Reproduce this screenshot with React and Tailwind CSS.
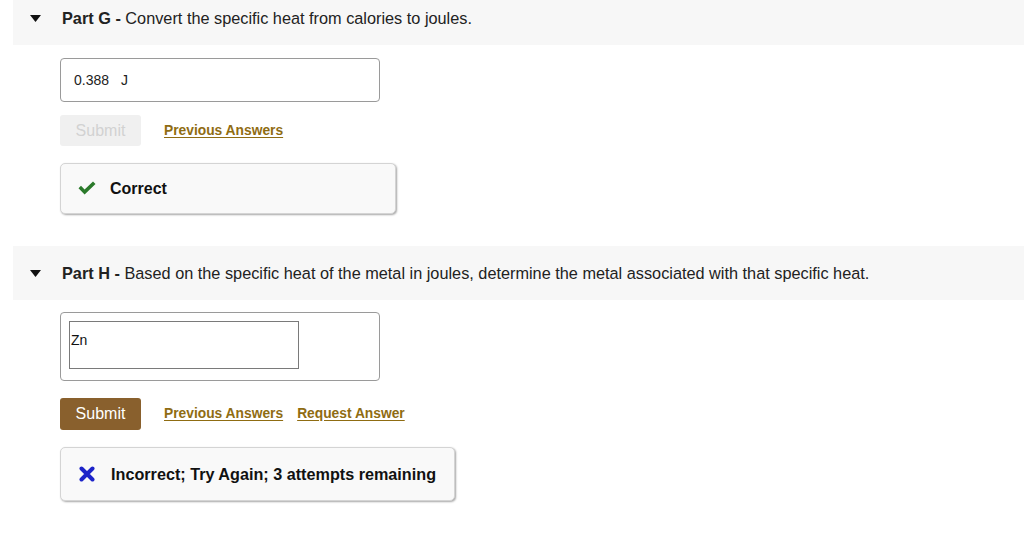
import React from 'react';

const font = { fontFamily: '"Liberation Sans", Arial, Helvetica, sans-serif' };

const Caret = () => (
    <svg width="11" height="7" viewBox="0 0 11 7" className="shrink-0">
        <path d="M0 0 L11 0 L5.5 7 Z" fill="#111" />
    </svg>
);

const Check = () => (
    <svg width="18" height="15" viewBox="0 0 18 15">
        <path d="M0.5 7.2 L3 4.8 L6.6 8.4 L15 0.5 L17.5 3 L6.6 13.6 Z" fill="#2b7a2b" />
    </svg>
);

const Cross = () => (
    <svg width="16" height="16" viewBox="0 0 16 16">
        <path d="M2.5 2.5 L13.5 13.5 M13.5 2.5 L2.5 13.5" stroke="#1d24c9" strokeWidth="4" strokeLinecap="round" />
    </svg>
);

const PartHeader = ({ label, text, className }) => (
    <div className={`ml-[13px] h-[54px] bg-[#f7f7f7] flex items-center pl-[17px] ${className}`}>
        <Caret />
        <div className="ml-[21px] text-[16.3px] text-[#222] pt-[1px]">
            <span className="font-bold">{label} -</span> {text}
        </div>
    </div>
);

const LinkText = ({ children }) => (
    <a href="#" className="text-[13.8px] font-bold text-[#8f6c12] underline underline-offset-2">{children}</a>
);

export default function App() {
    return (
        <div className="w-full h-[535px] bg-white overflow-hidden" style={font}>
            {/* Part G */}
            <PartHeader label="Part G" text="Convert the specific heat from calories to joules." className="-mt-[9px]" />
            <div className="pl-[60px]">
                <div className="mt-[13px] w-[320px] h-[44px] rounded-[4px] border border-[#9a9a9a] flex items-center pl-[13px] text-[14px] text-[#222]">
                    <span>0.388</span>
                    <span className="ml-[12px]">J</span>
                </div>
                <div className="mt-[13px] flex items-center">
                    <button className="w-[81px] h-[31px] rounded-[3px] bg-[#f0f0f0] text-[16px] text-[#d2d2d2]">Submit</button>
                    <div className="ml-[23px] -mt-[2px]"><LinkText>Previous Answers</LinkText></div>
                </div>
                <div className="mt-[17px] w-[336px] h-[51px] rounded-[5px] border border-[#d4d4d4] bg-[#f9f9f9] shadow-[1px_1px_2px_rgba(0,0,0,0.35)] flex items-center pl-[17px]">
                    <Check />
                    <span className="ml-[14px] text-[16px] font-bold text-[#111]">Correct</span>
                </div>
            </div>

            {/* Part H */}
            <PartHeader label="Part H" text="Based on the specific heat of the metal in joules, determine the metal associated with that specific heat." className="mt-[32px]" />
            <div className="pl-[60px]">
                <div className="mt-[12px] w-[320px] h-[69px] rounded-[4px] border border-[#9a9a9a] pt-[8px] pl-[8px]">
                    <div className="w-[230px] h-[48px] border border-[#7a7a7a] text-[14px] text-[#111] pt-[8px] pl-[1px]">Zn</div>
                </div>
                <div className="mt-[17px] flex items-center">
                    <button className="w-[81px] h-[32px] rounded-[3px] bg-[#89602d] text-[16px] text-white">Submit</button>
                    <div className="ml-[23px] -mt-[2px]"><LinkText>Previous Answers</LinkText></div>
                    <div className="ml-[14px] -mt-[2px]"><LinkText>Request Answer</LinkText></div>
                </div>
                <div className="mt-[17px] w-[395px] h-[54px] rounded-[5px] border border-[#d4d4d4] bg-[#f9f9f9] shadow-[1px_1px_2px_rgba(0,0,0,0.35)] flex items-center pl-[18px]">
                    <Cross />
                    <span className="ml-[16px] text-[16.2px] font-bold text-[#111]">Incorrect; Try Again; 3 attempts remaining</span>
                </div>
            </div>
        </div>
    );
}
